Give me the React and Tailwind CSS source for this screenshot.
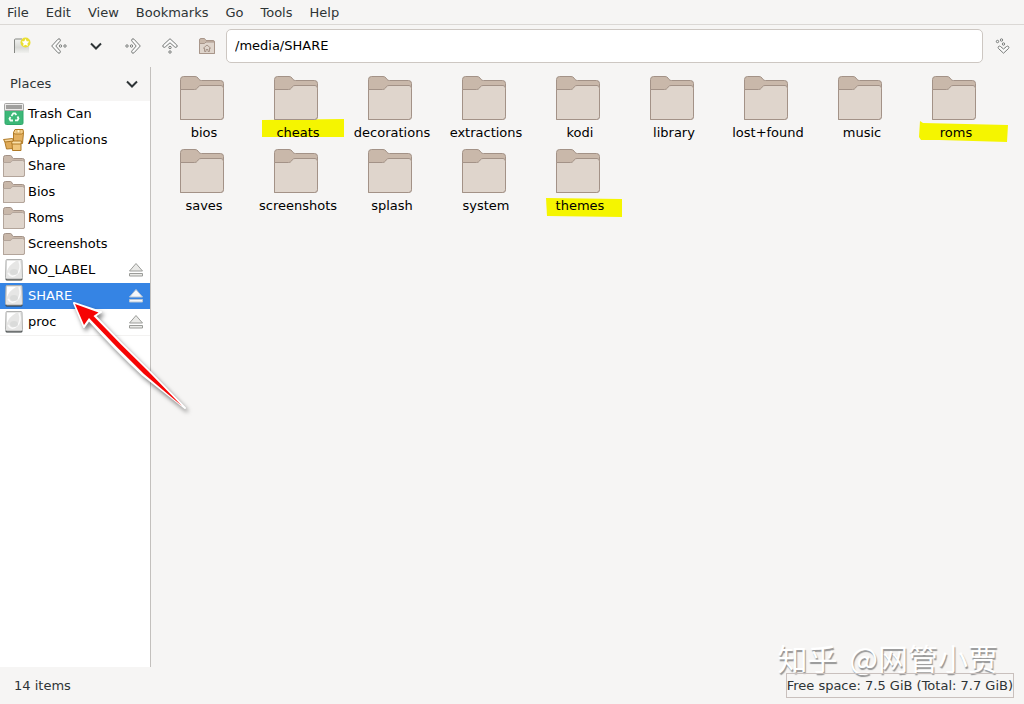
const menus = ['File', 'Edit', 'View', 'Bookmarks', 'Go', 'Tools', 'Help'];

const places = [
  { name: 'Trash Can', icon: 'trash' },
  { name: 'Applications', icon: 'apps' },
  { name: 'Share', icon: 'folder' },
  { name: 'Bios', icon: 'folder' },
  { name: 'Roms', icon: 'folder' },
  { name: 'Screenshots', icon: 'folder' },
  { name: 'NO_LABEL', icon: 'drive' },
  { name: 'SHARE', icon: 'drive', selected: true },
  { name: 'proc', icon: 'drive' },
];

const folders = [
  { name: 'bios' },
  { name: 'cheats', marker: '11,44 93,43 93,61 11,61' },
  { name: 'decorations' },
  { name: 'extractions' },
  { name: 'kodi' },
  { name: 'library' },
  { name: 'lost+found' },
  { name: 'music' },
  { name: 'roms', marker: '11,45 14,47 99,49 98,66 30,64 12,64 10,61' },
  { name: 'saves' },
  { name: 'screenshots' },
  { name: 'splash' },
  { name: 'system' },
  { name: 'themes', marker: '13,49 89,50 89,68 14,67' },
];

function FolderIcon() {
  return (
    <svg width="48" height="48" viewBox="0 0 48 48" fill="none" stroke="#a39287" className="relative">
      <path d="M.5 43.5V3.5q0-3 3-3h11.500q2 0 3 1.500l1 1.500q1 1 2.500 1h19q3 0 3 3v33q0 3-3 3z" fill="#c9b8aa" />
      <path d="M.5 43.500V14q0-.5.5-.5h13.500q2 0 3-1.500l1-1.500q1-1 2.500-1h20q2.500 0 2.500 3v28q0 3-3 3z" fill="#dfd5cc" />
    </svg>
  );
}

function SmallFolderIcon() {
  return (
    <svg width="22" height="22" viewBox="0 0 22 22" fill="none" stroke="#a39287">
      <path d="M.5 21.500V2.500q0-2 2-2h5q1 0 1.500 1.500t1.500 1.500h9q2 0 2 2v14.500q0 1.500-1.500 1.500z" fill="#c9b8aa" />
      <path d="M.5 21.500V7.500h6.500q1 0 1.500-1t1.500-1h9.500q2 0 2 2v12.500q0 1.500-1.500 1.500z" fill="#dfd5cc" stroke="#b3a59b" />
    </svg>
  );
}

function TrashIcon() {
  return (
    <svg width="22" height="22" viewBox="0 0 22 22" fill="none">
      <path d="M2 5h18v15q0 1.500-1.500 1.500h-15Q2 21.500 2 20z" fill="#3cb878" stroke="#2fa76b" />
      <rect x="1.500" y=".5" width="19" height="7" rx="1" fill="#ecebea" stroke="#a5a5a3" />
      <rect x="3" y="2" width="16" height="4" fill="#a0a09e" />
      <g stroke="#f1fff6" strokeWidth="1.800">
        <path d="M8.500 13l1.800-2.700h1.800l1.200 1.800" />
        <path d="M14.500 13.500l1 2-1 1.800h-2.500" />
        <path d="M10 17.500H7.500l-1-1.800 1-1.700" />
      </g>
    </svg>
  );
}

function AppsIcon() {
  return (
    <svg width="22" height="22" viewBox="0 0 22 22" stroke="#b07a26" strokeLinejoin="round">
      <path d="M10.500 3.500h10l-1 11h-9z" fill="#e3b060" />
      <path d="M10.500 3.500l1.500-3h8l.5 3-2 1.500h-7z" fill="#f3cf8d" />
      <path d="M14 1v3h3V1" fill="#fff0c5" stroke="#dcae62" />
      <path d="M1.500 11.500h9v8l-7 .5z" fill="#e0ab58" />
      <path d="M.5 10.500l9-1 1 2.500-8.500 1z" fill="#f6d59b" />
      <path d="M9 14h9v7.500h-8.500z" fill="#f0c67c" />
      <path d="M8.500 13.500l2-1.500h8l-.5 3h-9z" fill="#fbe1aa" />
    </svg>
  );
}

function DriveIcon() {
  return (
    <svg width="22" height="22" viewBox="0 0 22 22">
      <path d="M3 18h16l.5 2q0 1.500-1.500 1.500H4q-1.500 0-1.500-1.500z" fill="#2e3436" />
      <path d="M4 .5h14q1 0 1 1l.5 17q0 1.500-1.500 1.500H4q-1.500 0-1.500-1.500l.5-17q0-1 1-1z" fill="#e6e6e5" stroke="#b0b1b0" />
      <path d="M4 2h9Q6 6 4 12z" fill="#fff" />
      <path d="M16 2q3 8-2 13t-9-1" fill="none" stroke="#fafafa" strokeWidth="1.500" />
      <ellipse cx="11" cy="13" rx="4" ry="3" fill="#dadbda" />
    </svg>
  );
}

const placeIcons = { trash: TrashIcon, apps: AppsIcon, folder: SmallFolderIcon, drive: DriveIcon };

function EjectIcon({ selected }) {
  return (
    <svg width="16" height="16" viewBox="0 0 16 16" fill={selected ? '#f4f7fb' : '#e9e9e7'} stroke={selected ? '#b9c6d4' : '#9b9c99'}>
      <path d="M8 1.500l6.500 7.500h-13z" />
      <path d="M1.500 11.500h13v2.500h-13z" />
    </svg>
  );
}

// Outlined chevron with two trailing dots, turned for back / forward / up
function DottedArrow({ className }) {
  return (
    <svg width="16" height="16" viewBox="0 0 16 16" fill="#fafafa" stroke="#777a78" className={className}>
      <path d="M.7 8L7 1.200q1-.9 2 0 .9 1 0 2L4.800 8 9 12.800q.9 1 0 2-1 .9-2 0z" />
      <circle cx="9.500" cy="8" r="1.200" />
      <circle cx="14" cy="8" r="1.200" />
    </svg>
  );
}

function JumpIcon() {
  return (
    <svg width="16" height="16" viewBox="0 0 16 16" fill="#fafafa" stroke="#777a78">
      <circle cx="2.500" cy="3.500" r="1.200" />
      <circle cx="6.500" cy="2" r="1.200" />
      <circle cx="8.500" cy="6" r="1.200" />
      <path d="M8.500 15.200L3.500 10.500q-.8-1 0-2 1-.8 2 0l3 2.500 3-2.500q1-.8 2 0 .8 1 0 2z" />
    </svg>
  );
}

function NewTabIcon() {
  return (
    <svg width="18" height="18" viewBox="0 0 18 18">
      <defs>
        <linearGradient id="page" x2="0" y2="1">
          <stop stopColor="#f2f3f1" />
          <stop offset=".6" stopColor="#d8d9d5" />
          <stop offset="1" stopColor="#f1f1ef" />
        </linearGradient>
      </defs>
      <path d="M1.500 16V3q0-1 1-1H16v14z" fill="url(#page)" />
      <path d="M1.500 16V3q0-1 1-1H9" fill="none" stroke="#858783" />
      <circle cx="12.500" cy="5.500" r="5" fill="#eadf32" />
      <path d="M12.500 1.800l1.200 2.400 2.600.4-1.900 1.800.5 2.600-2.400-1.200L10.100 9l.5-2.600-1.900-1.800 2.600-.4z" fill="#fff" />
    </svg>
  );
}

function HomeIcon() {
  return (
    <svg width="16" height="16" viewBox="0 0 16 16" fill="none" stroke="#a8968a">
      <path d="M.5 15.500V2q0-1.500 1.500-1.500h3.500l1.500 2h7q1.500 0 1.500 1.500v11.500z" fill="#c9b8aa" />
      <path d="M.5 15.500V5.500h5l1.500-1.500h8.500v11.500z" fill="#dfd5cc" />
      <path d="M4 10.500L8 7l4 3.500M5.500 10v3.500H7v-2h2v2h1.500V10" />
    </svg>
  );
}

function ChevronDown() {
  return (
    <svg width="12" height="12" viewBox="0 0 12 12" fill="none" stroke="#2e3436" strokeWidth="2">
      <path d="M1 3.500l5 5 5-5" />
    </svg>
  );
}

function ToolButton({ label, children }) {
  return (
    <button aria-label={label} className="flex h-8 w-[37px] shrink-0 items-center justify-center">
      {children}
    </button>
  );
}

function PlaceRow({ name, icon, selected }) {
  const Icon = placeIcons[icon];
  return (
    <li className={`flex h-[26px] items-center pr-[6px] ${selected ? 'bg-[#3584e4] text-white' : 'text-black'}`}>
      <a href="#" className="flex flex-1 items-center gap-[3px] pl-[3px]">
        <Icon />
        <span>{name}</span>
      </a>
      {icon === 'drive' && (
        <button aria-label={`Eject ${name}`}>
          <EjectIcon selected={selected} />
        </button>
      )}
    </li>
  );
}

function FolderItem({ name, marker }) {
  return (
    <button className="relative flex flex-col items-center">
      {marker && (
        <svg width="110" height="72" className="absolute top-0 left-0">
          <polygon points={marker} fill="#f5f500" />
        </svg>
      )}
      <FolderIcon />
      <span className="relative leading-[18px]">{name}</span>
    </button>
  );
}

function PointerArrow() {
  return (
    <svg width="130" height="120" viewBox="0 0 130 120" className="pointer-events-none absolute top-[296px] left-[68px] drop-shadow-[2px_3px_2px_rgba(0,0,0,0.5)]">
      <path
        d="M6 7l10 24 5-7Q47 53 75 79l42 33L81 75Q53 48 27 20l6-4z"
        fill="#fff"
        stroke="#fff"
        strokeWidth="2"
        strokeLinejoin="round"
      />
      <path d="M7 8l9 21 5-7Q48 51 76 78l38 32L80 75Q53 49 25.500 20l5-3.500z" fill="#f60404" />
    </svg>
  );
}

export default function App() {
  return (
    <div className="relative flex min-h-screen flex-col bg-[#f6f5f4] font-['DejaVu_Sans',sans-serif] text-[13px] text-[#2e3436]">
      <nav className="flex h-[25px] items-center gap-[17px] border-b border-[#dbd8d5] pt-[2px] pl-[7px]">
        {menus.map((menu) => (
          <button key={menu}>{menu}</button>
        ))}
      </nav>

      {/* Toolbar */}
      <div className="flex h-[42px] items-center pr-[2px] pl-[3px]">
        <ToolButton label="New tab"><NewTabIcon /></ToolButton>
        <ToolButton label="Back"><DottedArrow /></ToolButton>
        <ToolButton label="History"><ChevronDown /></ToolButton>
        <ToolButton label="Forward"><DottedArrow className="rotate-180" /></ToolButton>
        <ToolButton label="Up"><DottedArrow className="rotate-90" /></ToolButton>
        <ToolButton label="Home"><HomeIcon /></ToolButton>
        <input
          aria-label="Location"
          defaultValue="/media/SHARE"
          className="ml-px h-[34px] min-w-0 flex-1 rounded-[5px] border border-[#cdc7c2] bg-white px-2 pb-[2px] text-black outline-none"
        />
        <button aria-label="Go to location" className="flex h-8 w-[39px] items-center justify-center">
          <JumpIcon />
        </button>
      </div>

      <div className="flex flex-1">
        {/* Places */}
        <aside className="flex w-[151px] shrink-0 flex-col border-r border-[#c3c0bd] bg-white">
          <button className="flex h-[34px] items-center justify-between bg-[#f6f5f4] pr-3 pl-[10px]">
            <span>Places</span>
            <ChevronDown />
          </button>
          <ul className="border-b border-[#f3f2f1]">
            {places.map((place) => (
              <PlaceRow key={place.name} {...place} />
            ))}
          </ul>
        </aside>

        <main className="grid flex-1 grid-cols-[repeat(auto-fill,94px)] content-start gap-y-[7px] pt-[9px] pl-[6px] text-black">
          {folders.map((folder) => (
            <FolderItem key={folder.name} {...folder} />
          ))}
        </main>
      </div>

      <footer className="relative flex h-[37px] items-center justify-between pr-[10px] pl-[14px]">
        <span>14 items</span>
        <span className="absolute right-[26px] bottom-8 flex gap-3 font-['Noto_Sans_CJK_SC',sans-serif] text-[30px] leading-[30px] whitespace-nowrap text-white [text-shadow:1px_2px_1px_#959595]">
          <span>知乎</span>
          <span>@网管小贾</span>
        </span>
        <span className="relative flex h-[25px] items-center border border-[#c9c0bd] whitespace-nowrap">
          Free space: 7.5 GiB (Total: 7.7 GiB)
        </span>
      </footer>

      <PointerArrow />
    </div>
  );
}
